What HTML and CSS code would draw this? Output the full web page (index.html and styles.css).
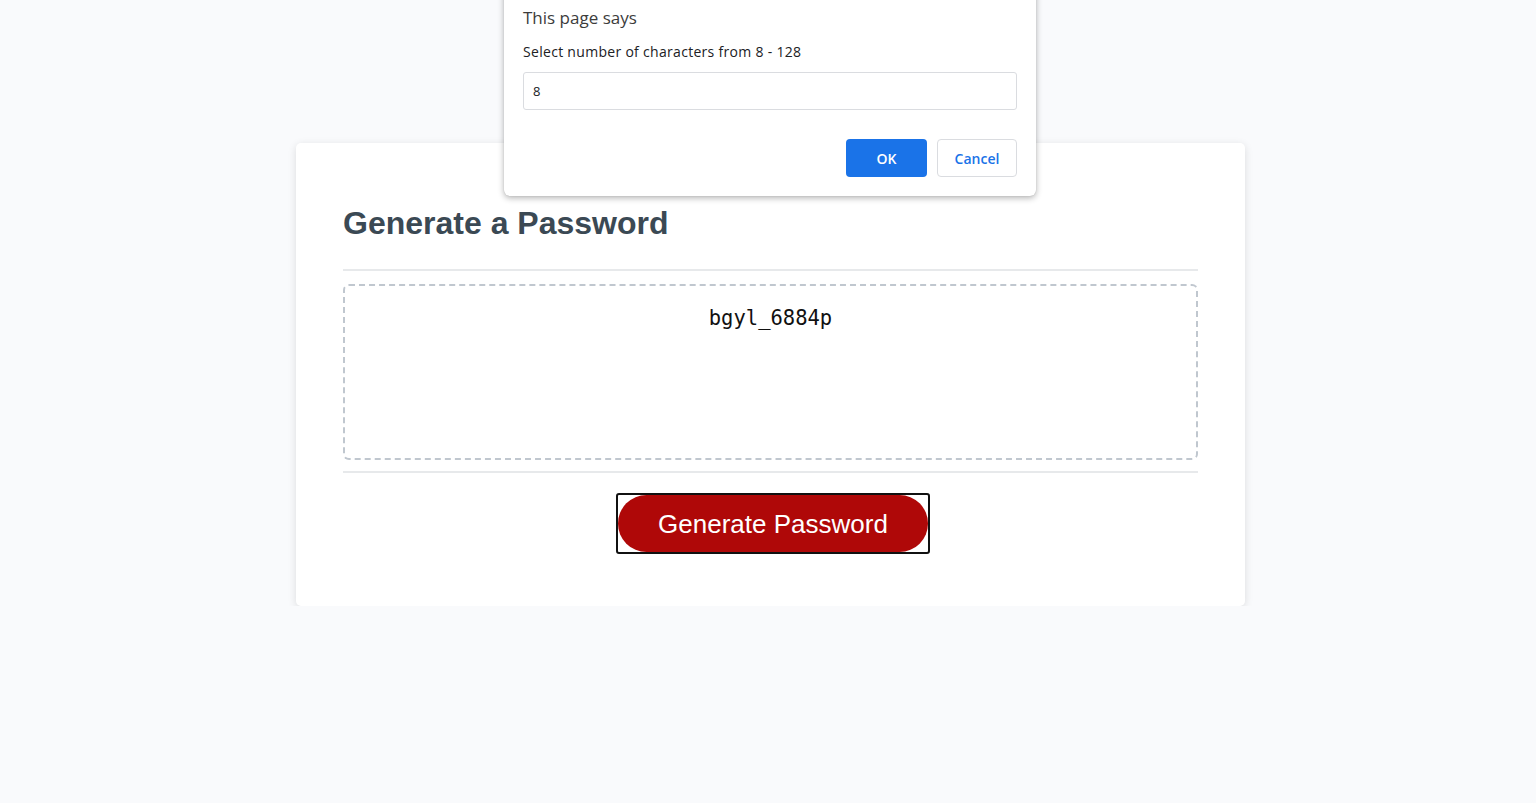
FILE: index.html
```html
<!DOCTYPE html>
<html lang="en">
<head>
    <meta charset="UTF-8">
    <title>Password Generator</title>
    <meta name="viewport" content="width=device-width, initial-scale=1.0">
    <link rel="stylesheet" href="styles.css">
</head>
<body>
    <div class="wrapper">
        <div class="card">
            <div class="card-header">
                <h2>Generate a Password</h2>
            </div>
            <div class="card-body">
                <textarea readonly id="password" class="password-box" aria-label="Generated Password">bgyl_6884p</textarea>
            </div>
            <div class="card-footer">
                <span class="focus-ring">
                    <button id="generate" class="btn">Generate Password</button>
                </span>
            </div>
        </div>
    </div>

    <!-- prompt() dialog of the browser -->
    <div class="dialog">
        <div class="dialog-title">This page says</div>
        <div class="dialog-message">Select number of characters from 8 - 128</div>
        <input class="dialog-input" type="text" value="8">
        <div class="dialog-actions">
            <button class="dialog-btn dialog-ok">OK</button>
            <button class="dialog-btn dialog-cancel">Cancel</button>
        </div>
    </div>
</body>
</html>
```

FILE: styles.css
```css
body {
    margin: 0;
    font-family: "Liberation Sans", Arial, sans-serif;
    background-color: #f9fafc;
}
.wrapper {
    padding: 143px 20px 0 25px;
}
.card {
    background-color: #ffffff;
    border-radius: 5px;
    box-shadow: rgba(0, 0, 0, 0.12) 0 2px 8px 0;
    color: hsl(206, 17%, 28%);
    margin: 0 auto;
    max-width: 855px;
    padding: 40px 47px 52px;
}
.card-header h2 {
    margin: 22px 0 27px;
    font-size: 32px;
    font-weight: bold;
    line-height: 37px;
}
.card-header::after,
.card-footer::before {
    content: " ";
    display: block;
    width: 100%;
    height: 2px;
    background: #e7e9eb;
}
.card-body {
    padding: 13px 0 11px;
}
.password-box {
    display: block;
    box-sizing: border-box;
    width: 100%;
    height: 176px;
    margin: 0;
    padding: 20px 15px 0;
    border: 2px dashed #c0c7cf;
    border-radius: 6px;
    font-family: "DejaVu Sans Mono", "Liberation Mono", monospace;
    font-size: 20.5px;
    color: #111;
    text-align: center;
    resize: none;
    overflow: hidden;
    outline: none;
    background: #fff;
}
.card-footer {
    text-align: center;
}
.focus-ring {
    display: inline-block;
    margin: 20px 0 0 5px;
    border: 2px solid #111;
    border-radius: 3px;
    line-height: 0;
}
.btn {
    border: none;
    background-color: hsl(360, 91%, 36%);
    border-radius: 29px;
    color: #fff;
    font-family: "Liberation Sans", Arial, sans-serif;
    font-size: 26px;
    line-height: 30px;
    padding: 14px 40px 13px 40px;
    cursor: pointer;
}

/* browser prompt */
.dialog {
    position: absolute;
    top: -13px;
    left: 504px;
    width: 532px;
    box-sizing: border-box;
    padding: 20px 19px 19px 19px;
    background: #fff;
    border-radius: 0 0 6px 6px;
    box-shadow: 0 2px 6px rgba(0, 0, 0, 0.3), 0 0 1px rgba(0, 0, 0, 0.2);
    font-family: "Open Sans", "Noto Sans", sans-serif;
    color: #202124;
}
.dialog-title {
    font-size: 17px;
    line-height: 22px;
    color: #3c3c3c;
}
.dialog-message {
    margin-top: 14px;
    font-size: 14px;
    line-height: 18px;
    letter-spacing: 0.3px;
    color: #202124;
}
.dialog-input {
    display: block;
    box-sizing: border-box;
    width: 100%;
    height: 38px;
    margin-top: 11px;
    padding: 0 9px;
    border: 1px solid #dadce0;
    border-radius: 3px;
    font-family: "Open Sans", "Noto Sans", sans-serif;
    font-size: 13px;
    color: #202124;
}
.dialog-actions {
    display: flex;
    justify-content: flex-end;
    gap: 10px;
    margin-top: 29px;
}
.dialog-btn {
    height: 38px;
    border-radius: 4px;
    font-family: "Open Sans", "Noto Sans", sans-serif;
    font-size: 14px;
    font-weight: 600;
    cursor: pointer;
}
.dialog-ok {
    width: 81px;
    border: none;
    background: #1a73e8;
    color: #fff;
}
.dialog-cancel {
    width: 80px;
    border: 1px solid #dadce0;
    background: #fff;
    color: #1a73e8;
}
```
